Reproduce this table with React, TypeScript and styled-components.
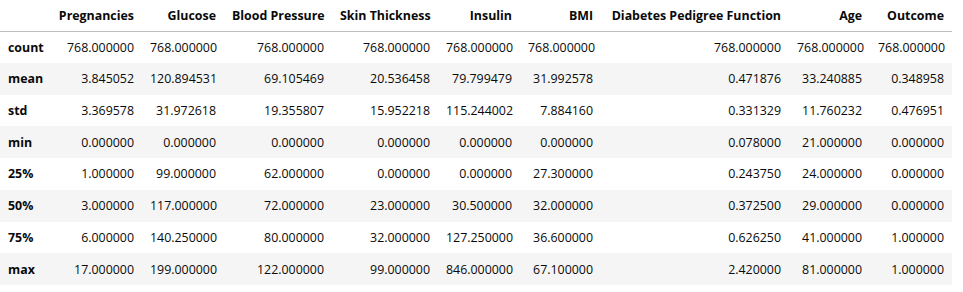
import { FunctionComponent } from "react";
import styled, { createGlobalStyle } from "styled-components";

const GlobalStyle = createGlobalStyle`
  html, body {
    margin: 0;
    padding: 0;
    background: #ffffff;
  }
`;

const columns = [
  { name: "Pregnancies", width: 92 },
  { name: "Glucose", width: 82 },
  { name: "Blood Pressure", width: 108 },
  { name: "Skin Thickness", width: 106 },
  { name: "Insulin", width: 82 },
  { name: "BMI", width: 81 },
  { name: "Diabetes Pedigree Function", width: 188 },
  { name: "Age", width: 81 },
  { name: "Outcome", width: 82 },
];

const rows: [string, string[]][] = [
  ["count", ["768.000000", "768.000000", "768.000000", "768.000000", "768.000000", "768.000000", "768.000000", "768.000000", "768.000000"]],
  ["mean", ["3.845052", "120.894531", "69.105469", "20.536458", "79.799479", "31.992578", "0.471876", "33.240885", "0.348958"]],
  ["std", ["3.369578", "31.972618", "19.355807", "15.952218", "115.244002", "7.884160", "0.331329", "11.760232", "0.476951"]],
  ["min", ["0.000000", "0.000000", "0.000000", "0.000000", "0.000000", "0.000000", "0.078000", "21.000000", "0.000000"]],
  ["25%", ["1.000000", "99.000000", "62.000000", "0.000000", "0.000000", "27.300000", "0.243750", "24.000000", "0.000000"]],
  ["50%", ["3.000000", "117.000000", "72.000000", "23.000000", "30.500000", "32.000000", "0.372500", "29.000000", "0.000000"]],
  ["75%", ["6.000000", "140.250000", "80.000000", "32.000000", "127.250000", "36.600000", "0.626250", "41.000000", "1.000000"]],
  ["max", ["17.000000", "199.000000", "122.000000", "99.000000", "846.000000", "67.100000", "2.420000", "81.000000", "1.000000"]],
];

const Frame = styled.div`
  width: 963px;
  height: 292px;
  overflow: hidden;
  font-family: "Open Sans", "Noto Sans", "Liberation Sans", sans-serif;
  font-size: 12.4px;
  color: #0a0a0a;
`;

const Table = styled.table`
  width: 952px;
  table-layout: fixed;
  border-collapse: collapse;
  border-spacing: 0;
`;

const HeadRow = styled.tr`
  height: 31px;
  border-bottom: 1px solid #bdbdbd;
`;

const HeadCell = styled.th`
  padding: 1px 8px 0;
  text-align: right;
  font-weight: 700;
  white-space: nowrap;
  vertical-align: middle;
`;

const BodyRow = styled.tr<{ $striped: boolean }>`
  height: 31.75px;
  background: ${(p) => (p.$striped ? "#f5f5f5" : "#ffffff")};
`;

const LabelCell = styled.th`
  padding: 0 8px;
  text-align: left;
  font-weight: 700;
  white-space: nowrap;
`;

const ValueCell = styled.td`
  padding: 0 8px;
  text-align: right;
  white-space: nowrap;
`;

const App: FunctionComponent = () => {
  return (
    <Frame>
      <GlobalStyle />
      <Table>
        <colgroup>
          <col style={{ width: 50 }} />
          {columns.map((c) => (
            <col key={c.name} style={{ width: c.width }} />
          ))}
        </colgroup>
        <thead>
          <HeadRow>
            <HeadCell />
            {columns.map((c) => (
              <HeadCell key={c.name}>{c.name}</HeadCell>
            ))}
          </HeadRow>
        </thead>
        <tbody>
          {rows.map(([label, values], i) => (
            <BodyRow key={label} $striped={i % 2 === 1}>
              <LabelCell>{label}</LabelCell>
              {values.map((v, j) => (
                <ValueCell key={j}>{v}</ValueCell>
              ))}
            </BodyRow>
          ))}
        </tbody>
      </Table>
    </Frame>
  );
};

export default App;
